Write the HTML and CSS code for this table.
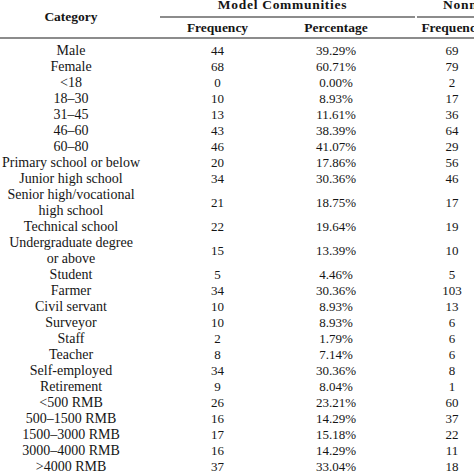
FILE: index.html
```html
<!DOCTYPE html>
<html>
<head>
<meta charset="utf-8">
<link rel="stylesheet" href="styles.css">
</head>
<body>
<table class="t">
<colgroup><col class="c1"><col class="c2"><col class="c3"><col class="c4"><col class="c5"><col class="c6"></colgroup>
<thead>
<tr class="h1"><th rowspan="2" class="cat">Category</th><th colspan="3" class="grp"><div class="gl g1">Model Communities</div></th><th colspan="2" class="grp"><div class="gl g2">Nonmodel Communities</div></th></tr>
<tr class="h2"><th>Frequency</th><th>Percentage</th><th></th><th>Frequency</th><th>Percentage</th></tr>
</thead>
<tbody>
<tr class="first"><td class="k">Male</td><td>44</td><td>39.29%</td><td></td><td>69</td><td>46.62%</td></tr>
<tr><td class="k">Female</td><td>68</td><td>60.71%</td><td></td><td>79</td><td>53.38%</td></tr>
<tr><td class="k">&lt;18</td><td>0</td><td>0.00%</td><td></td><td>2</td><td>1.35%</td></tr>
<tr><td class="k">18–30</td><td>10</td><td>8.93%</td><td></td><td>17</td><td>11.49%</td></tr>
<tr><td class="k">31–45</td><td>13</td><td>11.61%</td><td></td><td>36</td><td>24.32%</td></tr>
<tr><td class="k">46–60</td><td>43</td><td>38.39%</td><td></td><td>64</td><td>43.24%</td></tr>
<tr><td class="k">60–80</td><td>46</td><td>41.07%</td><td></td><td>29</td><td>19.59%</td></tr>
<tr><td class="k">Primary school or below</td><td>20</td><td>17.86%</td><td></td><td>56</td><td>37.84%</td></tr>
<tr><td class="k">Junior high school</td><td>34</td><td>30.36%</td><td></td><td>46</td><td>31.08%</td></tr>
<tr><td class="k">Senior high/vocational<br>high school</td><td>21</td><td>18.75%</td><td></td><td>17</td><td>11.49%</td></tr>
<tr><td class="k">Technical school</td><td>22</td><td>19.64%</td><td></td><td>19</td><td>12.84%</td></tr>
<tr><td class="k">Undergraduate degree<br>or above</td><td>15</td><td>13.39%</td><td></td><td>10</td><td>6.76%</td></tr>
<tr><td class="k">Student</td><td>5</td><td>4.46%</td><td></td><td>5</td><td>3.38%</td></tr>
<tr><td class="k">Farmer</td><td>34</td><td>30.36%</td><td></td><td>103</td><td>69.59%</td></tr>
<tr><td class="k">Civil servant</td><td>10</td><td>8.93%</td><td></td><td>13</td><td>8.78%</td></tr>
<tr><td class="k">Surveyor</td><td>10</td><td>8.93%</td><td></td><td>6</td><td>4.05%</td></tr>
<tr><td class="k">Staff</td><td>2</td><td>1.79%</td><td></td><td>6</td><td>4.05%</td></tr>
<tr><td class="k">Teacher</td><td>8</td><td>7.14%</td><td></td><td>6</td><td>4.05%</td></tr>
<tr><td class="k">Self-employed</td><td>34</td><td>30.36%</td><td></td><td>8</td><td>5.41%</td></tr>
<tr><td class="k">Retirement</td><td>9</td><td>8.04%</td><td></td><td>1</td><td>0.68%</td></tr>
<tr><td class="k">&lt;500 RMB</td><td>26</td><td>23.21%</td><td></td><td>60</td><td>40.54%</td></tr>
<tr><td class="k">500–1500 RMB</td><td>16</td><td>14.29%</td><td></td><td>37</td><td>25.00%</td></tr>
<tr><td class="k">1500–3000 RMB</td><td>17</td><td>15.18%</td><td></td><td>22</td><td>14.86%</td></tr>
<tr><td class="k">3000–4000 RMB</td><td>16</td><td>14.29%</td><td></td><td>11</td><td>7.43%</td></tr>
<tr><td class="k">&gt;4000 RMB</td><td>37</td><td>33.04%</td><td></td><td>18</td><td>12.16%</td></tr>
</tbody>
</table>
</body>
</html>
```

FILE: styles.css
```css
html, body {
  margin: 0;
  padding: 0;
  background: #fff;
  overflow: hidden;
}
body {
  width: 474px;
  height: 474px;
  font-family: "Liberation Serif", "Times New Roman", serif;
  color: #151515;
}
.t {
  table-layout: fixed;
  width: 609px;
  border-collapse: separate;
  border-spacing: 0;
  margin-top: -3px;
}
.c1 { width: 160px; }
.c2 { width: 115px; }
.c3 { width: 122px; }
.c4 { width: 20px; }
.c5 { width: 70px; }
.c6 { width: 122px; }
th, td {
  padding: 0;
  text-align: center;
  vertical-align: middle;
  line-height: 16px;
  white-space: nowrap;
  box-sizing: border-box;
}
th {
  font-weight: bold;
  font-size: 13.5px;
}
.grp {
  padding: 0;
}
.gl {
  border-bottom: 2px solid #8c8c8c;
  padding-bottom: 3px;
  letter-spacing: 0.7px;
}
.g1 {
  margin-right: 2px;
  padding-right: 10px;
}
.g2 {
  padding-left: 14px;
}
.h2 th {
  padding-top: 2px;
  padding-bottom: 1px;
  border-bottom: 2px solid #8c8c8c;
}
.cat {
  padding-right: 18px;
  border-bottom: 2px solid #8c8c8c;
}
td {
  font-size: 13px;
}
td.k {
  font-size: 14px;
  padding-right: 18px;
}
.first td {
  padding-top: 4px;
}
```
